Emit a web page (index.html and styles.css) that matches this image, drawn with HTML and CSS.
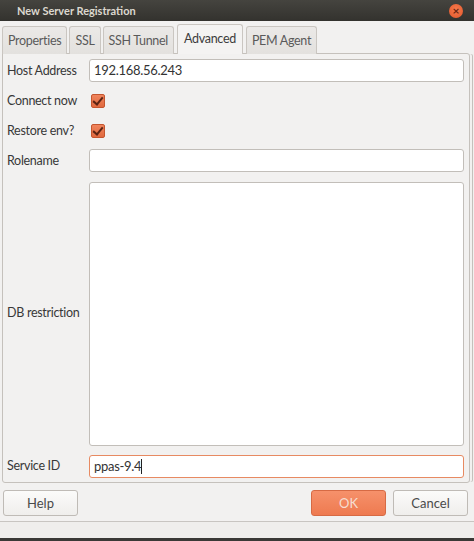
FILE: index.html
```html
<!DOCTYPE html>
<html lang="en">
<head>
  <meta charset="UTF-8">
  <title>New Server Registration</title>
  <link rel="stylesheet" href="styles.css">
</head>
<body>
  <div class="titlebar">
    <span class="title">New Server Registration</span>
    <span class="close">&times;</span>
  </div>

  <div class="tabs">
    <div class="tab">Properties</div>
    <div class="tab">SSL</div>
    <div class="tab">SSH Tunnel</div>
    <div class="tab active">Advanced</div>
    <div class="tab">PEM Agent</div>
  </div>

  <div class="panel">
    <label class="lbl">Host Address</label>
    <div class="field">192.168.56.243</div>

    <label class="lbl">Connect now</label>
    <div class="check-cell"><span class="check"></span></div>

    <label class="lbl">Restore env?</label>
    <div class="check-cell"><span class="check"></span></div>

    <label class="lbl">Rolename</label>
    <div class="field"></div>

    <label class="lbl">DB restriction</label>
    <div class="field area"></div>

    <label class="lbl">Service ID</label>
    <div class="field focused">ppas-9.4<span class="caret"></span></div>
  </div>

  <div class="buttons">
    <button class="btn">Help</button>
    <div class="right">
      <button class="btn ok">OK</button>
      <button class="btn">Cancel</button>
    </div>
  </div>

  <div class="statusbar"></div>
  <div class="behind"></div>
</body>
</html>
```

FILE: styles.css
```css
body {
  margin: 0;
  width: 474px;
  height: 541px;
  overflow: hidden;
  background: #f2f1f0;
  font-family: "Lato", "DejaVu Sans", sans-serif;
  font-size: 12.5px;
  letter-spacing: -0.3px;
  color: #383838;
}

/* window title */
.titlebar {
  height: 21px;
  background: linear-gradient(#45443f, #33322e);
  display: flex;
  align-items: center;
  justify-content: space-between;
  padding: 0 11px 0 17px;
}
.title {
  color: #dcd8cf;
  font-weight: bold;
  font-size: 11px;
  letter-spacing: 0;
}
.close {
  width: 14px;
  height: 14px;
  border-radius: 50%;
  background: radial-gradient(circle at 50% 40%, #f77b4d, #e2562b);
  color: #6b2410;
  font-size: 12px;
  line-height: 13px;
  text-align: center;
  font-weight: bold;
  letter-spacing: 0;
}

/* notebook tabs */
.tabs {
  display: flex;
  align-items: flex-end;
  gap: 2px;
  padding: 3px 0 0 2px;
  height: 33px;
  box-sizing: border-box;
  margin-bottom: -1px;
  position: relative;
}
.tab {
  height: 28px;
  box-sizing: border-box;
  padding: 0 5px;
  line-height: 27px;
  border: 1px solid #cac6c1;
  border-bottom: none;
  border-radius: 3px 3px 0 0;
  background: linear-gradient(#ebe9e7, #e3e1de);
  color: #5a5a5a;
}
.tab.active {
  height: 30px;
  line-height: 27px;
  background: #f4f3f2;
  color: #3c3c3c;
  padding: 0 6px;
  margin: 0 1px;
}

.panel {
  margin: 0 4px 0 2px;
  border: 1px solid #c5c1bc;
  border-radius: 0 3px 3px 3px;
  padding: 5px 5px 4px 4px;
  display: grid;
  grid-template-columns: 82px 1fr;
  grid-template-rows: 23px 23px 23px 23px 267px 25px;
  row-gap: 7px;
  align-items: center;
  box-shadow: 3px 0 0 -1px #f2f1f0, 4px 0 0 -1px #c5c1bc;
}
.lbl {
  padding-left: 0;
}
.field {
  height: 23px;
  box-sizing: border-box;
  background: #fff;
  border: 1px solid #c2beb9;
  border-radius: 3px;
  padding: 0 4px;
  line-height: 21px;
  color: #333;
  font-size: 13px;
}
.field.area {
  height: 264px;
  margin-top: 3px;
}
.panel .field.focused {
  border-color: #e78a62;
  margin-top: 2px;
}
.caret {
  display: inline-block;
  width: 1px;
  height: 15px;
  background: #222;
  vertical-align: -3px;
}
.check-cell {
  padding-left: 2px;
}
.check {
  display: block;
  width: 12px;
  height: 12px;
  border: 1px solid #c4552e;
  border-radius: 2px;
  background: linear-gradient(#f0845c, #e0693f);
  position: relative;
}
.check::after {
  content: "";
  position: absolute;
  left: 3px;
  top: 0;
  width: 4px;
  height: 8px;
  border: solid #5b2414;
  border-width: 0 2px 2px 0;
  transform: rotate(40deg);
}

/* dialog buttons */
.buttons {
  display: flex;
  justify-content: space-between;
  padding: 7px 6px 0 3px;
}
.right {
  display: flex;
  gap: 7px;
}
.btn {
  width: 75px;
  height: 26px;
  font-family: inherit;
  font-size: 13px;
  color: #4a4a4a;
  border: 1px solid #bfbbb6;
  border-radius: 3px;
  background: linear-gradient(#fbfbfa, #efeeec);
  padding: 0;
}
.btn.ok {
  background: linear-gradient(#f6916b, #ee7a50);
  border-color: #d66a44;
  color: #f6ddd1;
}

.statusbar {
  margin-top: 5px;
  height: 16px;
  border-top: 1px solid #c8c5c1;
  background: #efeeec;
}
.behind {
  height: 10px;
  background: #3a3936;
}
```
